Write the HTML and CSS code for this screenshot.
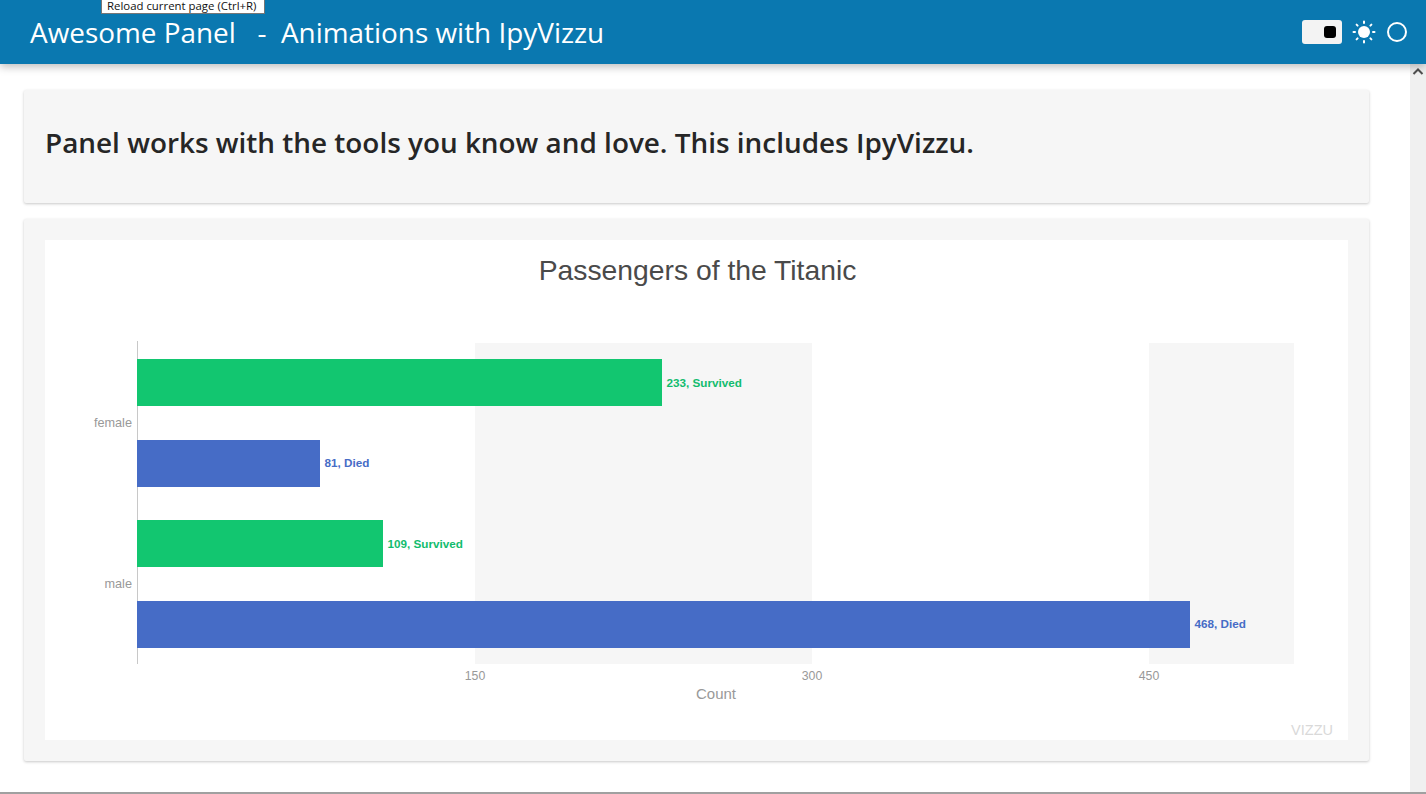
FILE: index.html
```html
<!DOCTYPE html>
<html lang="en">
<head>
<meta charset="utf-8">
<title>Awesome Panel - Animations with IpyVizzu</title>
<link rel="stylesheet" href="styles.css">
</head>
<body>
<div class="tooltip">Reload current page (Ctrl+R)</div>
<header class="topbar">
  <h1 class="title">Awesome Panel &nbsp; -&nbsp; Animations with IpyVizzu</h1>
  <div class="tools">
    <div class="toggle"><span class="knob"></span></div>
    <svg class="sun" width="24" height="24" viewBox="0 0 24 24" fill="none" stroke="#fff" stroke-width="2" stroke-linecap="round">
      <circle cx="12" cy="12" r="6" fill="#fff" stroke="none"/>
      <path d="M12 1.500v1.500M12 21v1.500M1.500 12h1.500M21 12h1.500M4.600 4.600l1 1M18.400 18.400l1 1M4.600 19.400l1-1M18.400 5.600l1-1"/>
    </svg>
    <span class="status"></span>
  </div>
</header>
<div class="body-row">
  <main class="main">
    <section class="card card-heading">
      <h2 class="heading">Panel works with the tools you know and love. This includes IpyVizzu.</h2>
    </section>
    <section class="card card-chart">
      <svg class="chart" width="1303" height="500" viewBox="45 240 1303 500">
        <rect class="band" x="475" y="343" width="337" height="321"/>
        <rect class="band" x="1149" y="343" width="145" height="321"/>
        <line class="axis" x1="137.500" y1="341" x2="137.500" y2="664"/>
        <rect class="survived" x="137" y="359" width="525" height="47"/>
        <rect class="died" x="137" y="440" width="183" height="47"/>
        <rect class="survived" x="137" y="520" width="246" height="47"/>
        <rect class="died" x="137" y="601" width="1053" height="47"/>
        <text class="chart-title" x="697.500" y="280">Passengers of the Titanic</text>
        <text class="cat" x="132" y="427">female</text>
        <text class="cat" x="132" y="588">male</text>
        <text class="lbl lbl-s" x="666.500" y="387">233, Survived</text>
        <text class="lbl lbl-d" x="324.500" y="467">81, Died</text>
        <text class="lbl lbl-s" x="387.500" y="548">109, Survived</text>
        <text class="lbl lbl-d" x="1194.500" y="628">468, Died</text>
        <text class="tick" x="475" y="680">150</text>
        <text class="tick" x="812" y="680">300</text>
        <text class="tick" x="1149" y="680">450</text>
        <text class="axis-title" x="716" y="699">Count</text>
        <text class="brand" x="1333" y="735">VIZZU</text>
      </svg>
    </section>
  </main>
  <aside class="scrollbar">
    <svg class="arrow" width="16" height="16" viewBox="0 0 16 16" fill="none" stroke="#505050" stroke-width="2"><path d="M3.500 10 8 5.500 12.500 10"/></svg>
  </aside>
</div>
<div class="bottom-line"></div>
</body>
</html>
```
FILE: styles.css
```css
html, body {
  margin: 0;
  height: 100%;
}
body {
  width: 1426px;
  height: 794px;
  overflow: hidden;
  display: flex;
  flex-direction: column;
  background: #fff;
  font-family: "Open Sans", "Noto Sans", sans-serif;
  position: relative;
}
.tooltip {
  position: absolute;
  left: 101px;
  top: -1px;
  width: 164px;
  height: 15px;
  box-sizing: border-box;
  background: #fff;
  border: 1px solid #767676;
  color: #111;
  font: 11.400px/12px "Open Sans", sans-serif;
  padding-left: 5px;
  white-space: nowrap;
  z-index: 5;
}
.topbar {
  height: 64px;
  flex: none;
  background: #0a78b0;
  box-shadow: 0 3px 8px rgba(0, 0, 0, .25);
  display: flex;
  align-items: center;
  justify-content: space-between;
  padding: 0 19px 0 30px;
  position: relative;
  z-index: 2;
}
.title {
  margin: 0 0 1px;
  font-size: 27.900px;
  font-weight: 400;
  color: #fff;
  white-space: nowrap;
}
.tools {
  display: flex;
  align-items: center;
  gap: 10px;
}
.toggle {
  width: 40px;
  height: 24px;
  background: #f3f3f3;
  border-radius: 3px;
  display: flex;
  align-items: center;
  justify-content: flex-end;
  padding-right: 6px;
  box-sizing: border-box;
}
.knob {
  width: 12px;
  height: 12px;
  background: #000;
  border-radius: 3px;
}
.status {
  width: 20px;
  height: 20px;
  box-sizing: border-box;
  border: 2.500px solid #fff;
  border-radius: 50%;
  margin-left: 1px;
}
.body-row {
  flex: 1;
  display: flex;
  min-height: 0;
}
.main {
  flex: 1;
  padding: 26px 41px 0 24px;
  display: flex;
  flex-direction: column;
  gap: 16px;
  min-width: 0;
}
.card {
  background: #f6f6f6;
  border-radius: 2px;
  box-shadow: 0 1px 3px rgba(0, 0, 0, .22);
}
.card-heading {
  height: 113px;
  padding: 0 21px;
  box-sizing: border-box;
  display: flex;
  align-items: center;
}
.heading {
  margin: 0 0 10px;
  font-size: 27.900px;
  font-weight: 600;
  color: #262626;
  white-space: nowrap;
}
.card-chart {
  height: 542px;
  padding: 21px;
  box-sizing: border-box;
}
.chart {
  display: block;
  background: #fff;
}
.band { fill: #f6f6f6; }
.axis { stroke: #c8c8c8; stroke-width: 1; }
.survived { fill: #12c670; }
.died { fill: #466cc6; }
.chart text { font-family: "Liberation Sans", Arial, sans-serif; }
.chart .chart-title { font-size: 28.300px; fill: #4a4a4a; text-anchor: middle; }
.chart .cat { font-size: 12.700px; fill: #999; text-anchor: end; }
.chart .tick { font-size: 12.300px; fill: #999; text-anchor: middle; }
.chart .axis-title { font-size: 15px; fill: #999; text-anchor: middle; }
.chart .lbl { font-size: 11.700px; font-weight: 700; }
.chart .lbl-s { fill: #12bc6e; }
.chart .lbl-d { fill: #466cc6; }
.chart .brand { font-size: 14.500px; fill: #d9d9d9; text-anchor: end; }
.scrollbar {
  width: 16px;
  flex: none;
  background: #f0f0f0;
}
.arrow { display: block; }
.bottom-line {
  height: 2px;
  flex: none;
  background: #a0a0a0;
}
```
